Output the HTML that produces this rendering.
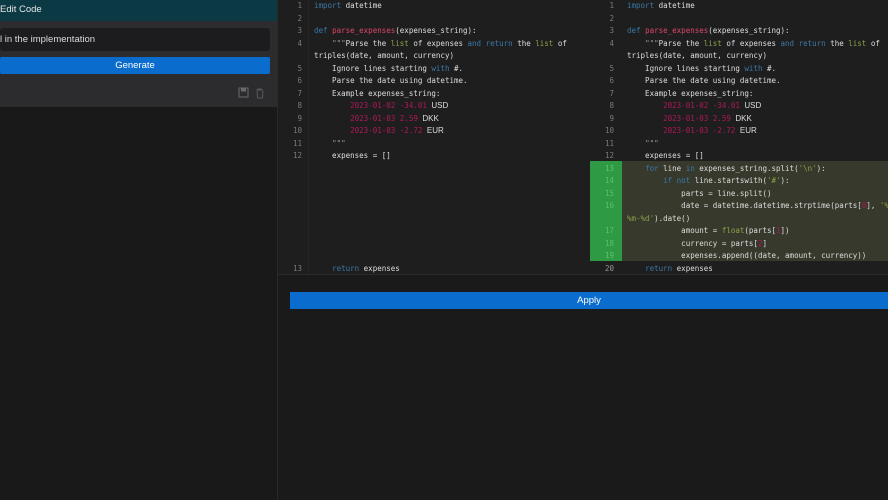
<!DOCTYPE html>
<html><head><style>
*{margin:0;padding:0;box-sizing:border-box}
body{width:888px;height:500px;overflow:hidden;background:#1a1a1a;font-family:"Liberation Sans",sans-serif;position:relative}
.abs{position:absolute}
.code{font-family:"DejaVu Sans Mono",monospace;font-size:7.5px;color:#dedede;white-space:pre;line-height:12.5px;height:12.5px}
.ln{font-family:"DejaVu Sans Mono",monospace;font-size:7.5px;color:#7a7a7a;line-height:12.5px;text-align:right;width:20px}
.k{color:#3b78a8}.f{color:#e0456b}.g{color:#8aa34a}.n{color:#b0185a}.s{color:#c8a070}.d{color:#9a9a9a}
.p{font-family:"Liberation Sans",sans-serif;font-size:8px}
</style></head><body>
<div class="abs" style="left:0;top:0;width:277px;height:500px;background:#191919"></div>
<div class="abs" style="left:0;top:0;width:277px;height:21px;background:#0b3a44"></div>
<div class="abs" style="left:0;top:4px;font-size:9.5px;color:#e6e6e6">Edit Code</div>
<div class="abs" style="left:0;top:21px;width:277px;height:86px;background:#2c2c2f"></div>
<div class="abs" style="left:0;top:28px;width:270px;height:23px;background:#1c1c1e;border-radius:3px"></div>
<div class="abs" style="left:0;top:34px;font-size:9.5px;color:#dcdcdc">l in the implementation</div>
<div class="abs" style="left:0;top:57px;width:270px;height:17px;background:#0a6ccc;border-radius:2px;color:#fff;font-size:9.5px;text-align:center;line-height:17px">Generate</div>
<svg class="abs" style="left:238px;top:87px" width="30" height="12" viewBox="0 0 30 12">
<rect x="1" y="1" width="9" height="9" fill="none" stroke="#6a6a6a" stroke-width="1"/><rect x="3" y="1.5" width="5" height="3" fill="#6a6a6a"/>
<path d="M18 3h7M20 3V2h3v1M19 4l.6 7h4.8L25 4" fill="none" stroke="#5a5a5a" stroke-width="1"/>
</svg>
<div class="abs" style="left:277px;top:0;width:1px;height:500px;background:#2a2a2a"></div>
<div class="abs" style="left:278px;top:0;width:610px;height:274px;background:#1e1e1e"></div>
<div class="abs" style="left:278px;top:274px;width:610px;height:1px;background:#2a2a2a"></div>
<div class="abs" style="left:308px;top:0;width:1px;height:274px;background:#262626"></div>
<div class="abs" style="left:590px;top:161px;width:32px;height:100px;background:#2e9a43"></div>
<div class="abs" style="left:622px;top:161px;width:266px;height:100px;background:#36392b"></div>
<div class="abs" style="left:290px;top:292px;width:598px;height:17px;background:#0a6ccc;color:#fff;font-size:9.5px;text-align:center;line-height:17px">Apply</div>

<div class="abs ln" style="left:282px;top:262.5px">13</div>
<div class="abs code" style="left:314px;top:262.5px">    <span class="k">return</span> expenses</div>

<div class="abs" style="left:282px;top:0">
<div class="ln">1</div><div class="ln">2</div><div class="ln">3</div><div class="ln">4</div><div class="ln">&nbsp;</div><div class="ln">5</div><div class="ln">6</div><div class="ln">7</div><div class="ln">8</div><div class="ln">9</div><div class="ln">10</div><div class="ln">11</div><div class="ln">12</div>
</div>
<div class="abs" style="left:314px;top:0">
<div class="code"><span class="k">import</span> datetime</div>
<div class="code"> </div>
<div class="code"><span class="k">def</span> <span class="f">parse_expenses</span>(expenses_string):</div>
<div class="code">    <span class="d">"""</span>Parse the <span class="g">list</span> of expenses <span class="k">and</span> <span class="k">return</span> the <span class="g">list</span> of</div>
<div class="code">triples(date, amount, currency)</div>
<div class="code">    Ignore lines starting <span class="k">with</span> #.</div>
<div class="code">    Parse the date using datetime.</div>
<div class="code">    Example expenses_string:</div>
<div class="code">        <span class="n">2023-01-02 -34.01</span> <span class="p">USD</span></div>
<div class="code">        <span class="n">2023-01-03 2.59</span> <span class="p">DKK</span></div>
<div class="code">        <span class="n">2023-01-03 -2.72</span> <span class="p">EUR</span></div>
<div class="code">    <span class="d">"""</span></div>
<div class="code">    expenses = []</div>
</div>

<div class="abs" style="left:594px;top:0">
<div class="ln">1</div><div class="ln">2</div><div class="ln">3</div><div class="ln">4</div><div class="ln">&nbsp;</div><div class="ln">5</div><div class="ln">6</div><div class="ln">7</div><div class="ln">8</div><div class="ln">9</div><div class="ln">10</div><div class="ln">11</div><div class="ln">12</div>
<div class="ln" style="color:#5fbf70">13</div><div class="ln" style="color:#5fbf70">14</div><div class="ln" style="color:#5fbf70">15</div><div class="ln" style="color:#5fbf70">16</div><div class="ln">&nbsp;</div><div class="ln" style="color:#5fbf70">17</div><div class="ln" style="color:#5fbf70">18</div><div class="ln" style="color:#5fbf70">19</div><div class="ln" style="color:#999">20</div>
</div>
<div class="abs" style="left:627px;top:0;width:261px;overflow:hidden">
<div class="code"><span class="k">import</span> datetime</div>
<div class="code"> </div>
<div class="code"><span class="k">def</span> <span class="f">parse_expenses</span>(expenses_string):</div>
<div class="code">    <span class="d">"""</span>Parse the <span class="g">list</span> of expenses <span class="k">and</span> <span class="k">return</span> the <span class="g">list</span> of</div>
<div class="code">triples(date, amount, currency)</div>
<div class="code">    Ignore lines starting <span class="k">with</span> #.</div>
<div class="code">    Parse the date using datetime.</div>
<div class="code">    Example expenses_string:</div>
<div class="code">        <span class="n">2023-01-02 -34.01</span> <span class="p">USD</span></div>
<div class="code">        <span class="n">2023-01-03 2.59</span> <span class="p">DKK</span></div>
<div class="code">        <span class="n">2023-01-03 -2.72</span> <span class="p">EUR</span></div>
<div class="code">    <span class="d">"""</span></div>
<div class="code">    expenses = []</div>
<div class="code">    <span class="k">for</span> line <span class="k">in</span> expenses_string.split(<span class="g">'\n'</span>):</div>
<div class="code">        <span class="k">if not</span> line.startswith(<span class="g">'#'</span>):</div>
<div class="code">            parts = line.split()</div>
<div class="code">            date = datetime.datetime.strptime(parts[<span class="n">0</span>], <span class="g">'%Y-</span></div>
<div class="code"><span class="g">%m-%d'</span>).date()</div>
<div class="code">            amount = <span class="g">float</span>(parts[<span class="n">1</span>])</div>
<div class="code">            currency = parts[<span class="n">2</span>]</div>
<div class="code">            expenses.append((date, amount, currency))</div>
<div class="code">    <span class="k">return</span> expenses</div>
</div>
</body></html>
